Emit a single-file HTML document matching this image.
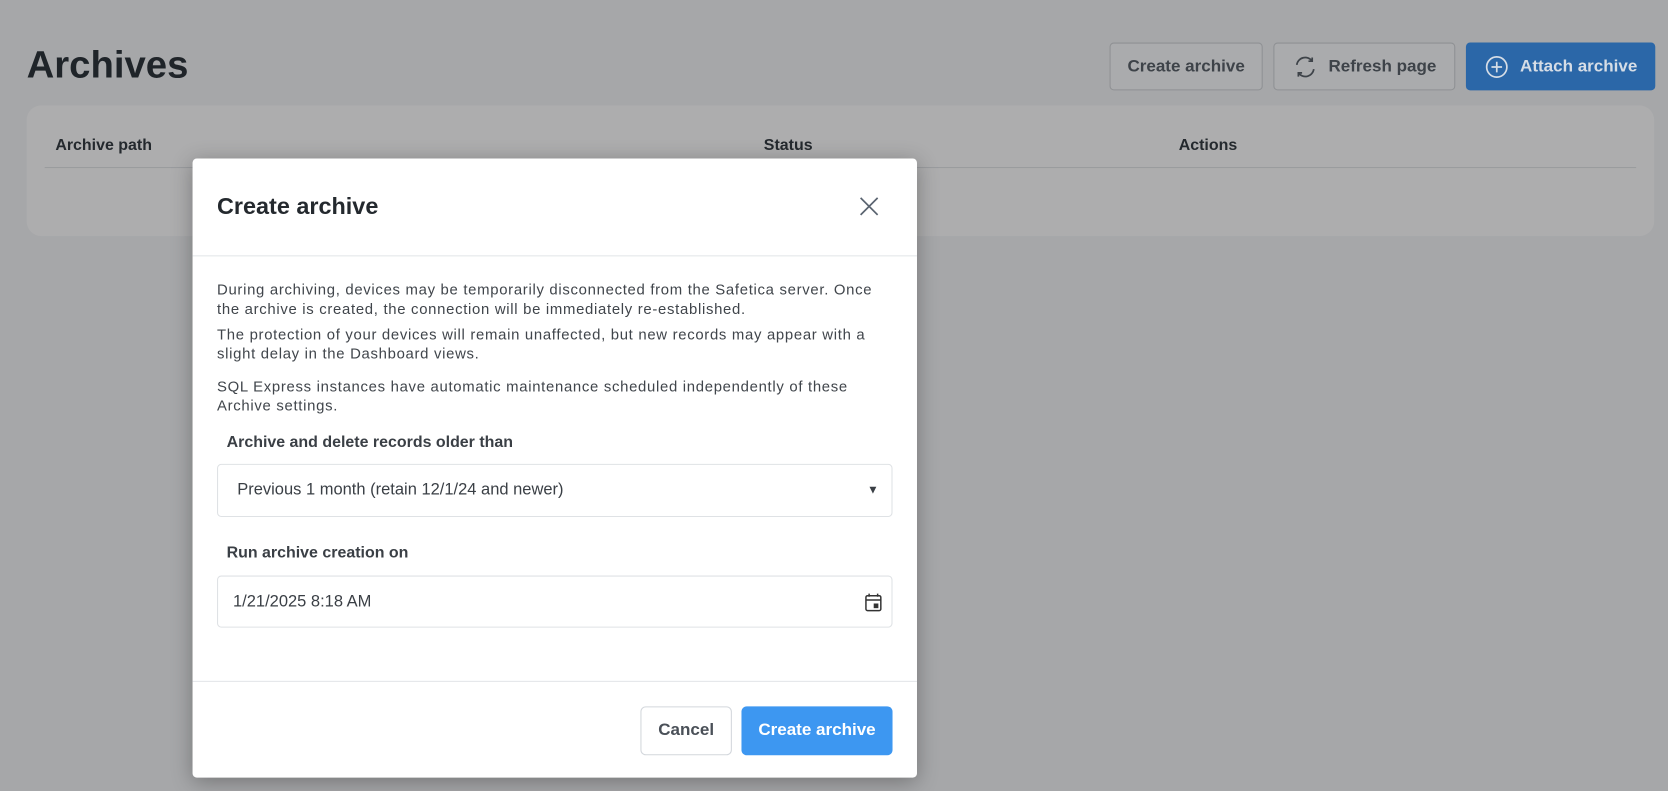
<!DOCTYPE html>
<html><head><meta charset="utf-8"><style>
*{box-sizing:border-box;margin:0;padding:0}
html,body{width:1668px;height:791px;overflow:hidden;background:#a6a7a9;font-family:"Liberation Sans",sans-serif}
#w{position:absolute;left:0;top:0;width:1568px;height:744px;transform:scale(1.0638);transform-origin:0 0}
.a{position:absolute}
.btn{position:absolute;border:1px solid #8f9194;border-radius:4px;background:#aaabad;color:#3e4349;font-weight:bold;font-size:16px;display:flex;align-items:center;justify-content:center;gap:10px}
.t{position:absolute;font-size:14px;letter-spacing:.65px;color:#40454b;line-height:18px}
.lbl{position:absolute;font-size:15px;font-weight:bold;color:#3a3f45}
.inp{position:absolute;border:1px solid #dfe2e5;border-radius:4px;background:#fff;font-size:15.5px;color:#3a3f45;display:flex;align-items:center}
</style></head><body><div id="w">
<div class="a" style="left:25px;top:40px;font-size:36px;font-weight:bold;color:#1f2429">Archives</div>
<div class="btn" style="left:1043px;top:40px;width:144px;height:45px">Create archive</div>
<div class="btn" style="left:1197px;top:40px;width:171px;height:45px"><svg width="24" height="24" viewBox="0 0 24 24" fill="none" stroke="#3e4349" stroke-width="1.6"><path d="M4 10a8 8 0 0 1 14.5-3.5M18.5 3v3.5H15M20 14a8 8 0 0 1-14.5 3.5M5.5 21v-3.5H9"/></svg>Refresh page</div>
<div class="btn" style="left:1378px;top:40px;width:178px;height:45px;background:#2b67a8;border-color:#2b67a8;color:#d6dde6"><svg width="24" height="24" viewBox="0 0 24 24" fill="none" stroke="#d6dde6" stroke-width="1.6"><circle cx="12" cy="12" r="9.5"/><path d="M12 7v10M7 12h10"/></svg>Attach archive</div>
<div class="a" style="left:25px;top:99px;width:1530px;height:123px;background:#adadae;border-radius:14px"></div>
<div class="a" style="left:52px;top:128px;font-size:15px;font-weight:bold;color:#24292e">Archive path</div>
<div class="a" style="left:718px;top:128px;font-size:15px;font-weight:bold;color:#24292e">Status</div>
<div class="a" style="left:1108px;top:128px;font-size:15px;font-weight:bold;color:#24292e">Actions</div>
<div class="a" style="left:42px;top:157px;width:1496px;height:1px;background:#999b9e"></div>

<div class="a" style="left:181px;top:149px;width:681px;height:582px;background:#fff;border-radius:4px;box-shadow:0 4px 20px rgba(0,0,0,.3)">
<div class="a" style="left:23px;top:32px;font-size:22px;color:#24292e;font-weight:bold">Create archive</div>
<svg class="a" style="left:626px;top:35px" width="20" height="20" viewBox="0 0 20 20" stroke="#5a6470" stroke-width="1.6"><path d="M2 2l16 16M18 2L2 18"/></svg>
<div class="a" style="left:0;top:91px;width:681px;height:1px;background:#e3e6e9"></div>
<div class="t" style="left:23px;top:114px;width:635px">During archiving, devices may be temporarily disconnected from the Safetica server. Once the archive is created, the connection will be immediately re-established.</div>
<div class="t" style="left:23px;top:156px;width:635px">The protection of your devices will remain unaffected, but new records may appear with a slight delay in the Dashboard views.</div>
<div class="t" style="left:23px;top:205px;width:635px">SQL Express instances have automatic maintenance scheduled independently of these Archive settings.</div>
<div class="lbl" style="left:32px;top:258px">Archive and delete records older than</div>
<div class="inp" style="left:23px;top:287px;width:635px;height:50px;padding-left:18px">Previous 1 month (retain 12/1/24 and newer)<span style="position:absolute;right:12px;font-size:11px">▼</span></div>
<div class="lbl" style="left:32px;top:362px">Run archive creation on</div>
<div class="inp" style="left:23px;top:392px;width:635px;height:49px;padding-left:14px">1/21/2025 8:18 AM<svg style="position:absolute;right:8px" width="18" height="20" viewBox="0 0 18 20" fill="none" stroke="#333" stroke-width="1.4"><rect x="2" y="4" width="14" height="14" rx="1.5"/><path d="M5 2v3M13 2v3M2 8h14"/><rect x="10" y="12" width="3" height="3" fill="#333"/></svg></div>
<div class="a" style="left:0;top:491px;width:681px;height:1px;background:#e3e6e9"></div>
<div class="a" style="left:421px;top:515px;width:86px;height:46px;border:1px solid #d3d7dc;border-radius:5px;font-size:16px;font-weight:bold;color:#4a5058;display:flex;align-items:center;justify-content:center">Cancel</div>
<div class="a" style="left:516px;top:515px;width:142px;height:46px;background:#3d97f1;border-radius:5px;font-size:16px;font-weight:bold;color:#fff;display:flex;align-items:center;justify-content:center">Create archive</div>
</div>
</div></body></html>
